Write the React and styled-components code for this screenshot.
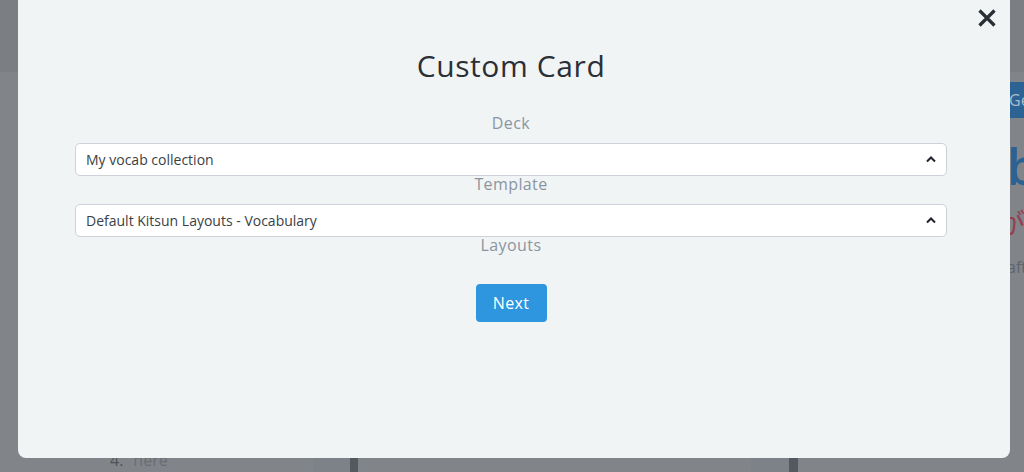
import React from "react";
import styled, { createGlobalStyle } from "styled-components";

const GlobalStyle = createGlobalStyle`
  html, body {
    margin: 0;
    padding: 0;
    width: 1024px;
    height: 472px;
    overflow: hidden;
    background: #818489;
    font-family: "Open Sans", "Liberation Sans", sans-serif;
  }
  * {
    box-sizing: border-box;
  }
`;

/* ---------- the dimmed page behind the modal ---------- */

const Page = styled.div`
  width: 1024px;
  height: 472px;
  display: flex;
  flex-direction: column;
  background: #818489;
  overflow: hidden;
`;

const PageHeader = styled.div`
  height: 72px;
  flex-shrink: 0;
  background: #7b7e83;
`;

const PageBody = styled.div`
  flex: 1;
  display: flex;
`;

const LeftColumn = styled.div`
  width: 313px;
  flex-shrink: 0;
  padding: 376px 0 0 110px;
`;

const ListItem = styled.div`
  display: flex;
  gap: 10px;
  font-size: 16px;
  line-height: 24px;
`;

const ItemNumber = styled.span`
  color: #4f5359;
`;

const ItemText = styled.span`
  color: #6a6e74;
`;

const Gutter = styled.div`
  width: ${(p) => p.w}px;
  flex-shrink: 0;
  background: ${(p) => (p.dark ? "#545960" : "#7d8289")};
`;

const MidColumn = styled.div`
  width: 393px;
  flex-shrink: 0;
`;

const RightColumn = styled.div`
  width: 300px;
  flex-shrink: 0;
  padding: 10px 0 0 197px;
  display: flex;
  flex-direction: column;
  align-items: flex-start;
  white-space: nowrap;
`;

const GetButton = styled.div`
  height: 36px;
  padding: 0 12px 0 14px;
  display: flex;
  align-items: center;
  background: #2c6294;
  color: #a9bccd;
  font-size: 16px;
`;

const BigWord = styled.div`
  margin-top: 22px;
  padding-left: 12px;
  font-size: 50px;
  line-height: 52px;
  font-weight: 600;
  color: #2b6293;
`;

const KanaWord = styled.div`
  margin-top: 14px;
  padding-left: 2px;
  font-family: "Noto Sans CJK JP", sans-serif;
  font-size: 28px;
  line-height: 32px;
  color: #94404f;
`;

const SmallText = styled.div`
  margin-top: 18px;
  padding-left: 12px;
  font-size: 16px;
  color: #5e6369;
`;

/* ---------- modal ---------- */

const Modal = styled.div`
  position: fixed;
  top: 0;
  left: 18px;
  width: 992px;
  height: 458px;
  background: #f1f4f5;
  border-radius: 0 0 8px 8px;
  padding: 48px 63px 0 57px;
  display: flex;
  flex-direction: column;
  align-items: center;
`;

const CloseButton = styled.button`
  position: absolute;
  top: 9px;
  right: 14px;
  width: 18px;
  height: 18px;
  padding: 0;
  border: none;
  background: none;
  cursor: pointer;
  color: #2a2e35;
  display: flex;
`;

const Title = styled.h1`
  margin: 0 0 31px;
  font-size: 30px;
  line-height: 36px;
  font-weight: 500;
  color: #2b2f36;
  letter-spacing: 0.6px;
`;

const FieldLabel = styled.div`
  font-size: 16px;
  line-height: 16px;
  color: #8a94a0;
  letter-spacing: 0.4px;
  margin-bottom: ${(p) => (p.last ? "31px" : "12px")};
`;

const Select = styled.div`
  width: 100%;
  height: 33px;
  background: #ffffff;
  border: 1px solid #cdd2d8;
  border-radius: 5px;
  padding: 0 10px 0 10px;
  display: flex;
  align-items: center;
  justify-content: space-between;
  font-size: 14px;
  color: #3a3f46;
`;

const NextButton = styled.button`
  width: 71px;
  height: 38px;
  border: none;
  border-radius: 4px;
  background: #2d96de;
  color: #ffffff;
  font-family: inherit;
  font-size: 16px;
  letter-spacing: 0.3px;
  cursor: pointer;
`;

function Chevron() {
  return (
    <svg width="10" height="7" viewBox="0 0 10 7">
      <polyline
        points="1,5.5 5,1.5 9,5.5"
        fill="none"
        stroke="#1f2329"
        strokeWidth="2"
      />
    </svg>
  );
}

function CloseIcon() {
  return (
    <svg width="18" height="18" viewBox="0 0 18 18">
      <path d="M1.5 1.5 L16.5 16.5 M16.5 1.5 L1.5 16.5" stroke="currentColor" strokeWidth="3.2" />
    </svg>
  );
}

export default function App() {
  return (
    <>
      <GlobalStyle />
      <Page>
        <PageHeader />
        <PageBody>
          <LeftColumn>
            <ListItem>
              <ItemNumber>4.</ItemNumber>
              <ItemText>here</ItemText>
            </ListItem>
          </LeftColumn>
          <Gutter w={37} />
          <Gutter w={8} dark />
          <MidColumn />
          <Gutter w={38} />
          <Gutter w={9} dark />
          <RightColumn>
            <GetButton>Get</GetButton>
            <BigWord>b</BigWord>
            <KanaWord>が</KanaWord>
            <SmallText>after</SmallText>
          </RightColumn>
        </PageBody>
      </Page>

      <Modal>
        <CloseButton aria-label="Close">
          <CloseIcon />
        </CloseButton>
        <Title>Custom Card</Title>
        <FieldLabel>Deck</FieldLabel>
        <Select>
          <span>My vocab collection</span>
          <Chevron />
        </Select>
        <FieldLabel>Template</FieldLabel>
        <Select>
          <span>Default Kitsun Layouts - Vocabulary</span>
          <Chevron />
        </Select>
        <FieldLabel last>Layouts</FieldLabel>
        <NextButton>Next</NextButton>
      </Modal>
    </>
  );
}
